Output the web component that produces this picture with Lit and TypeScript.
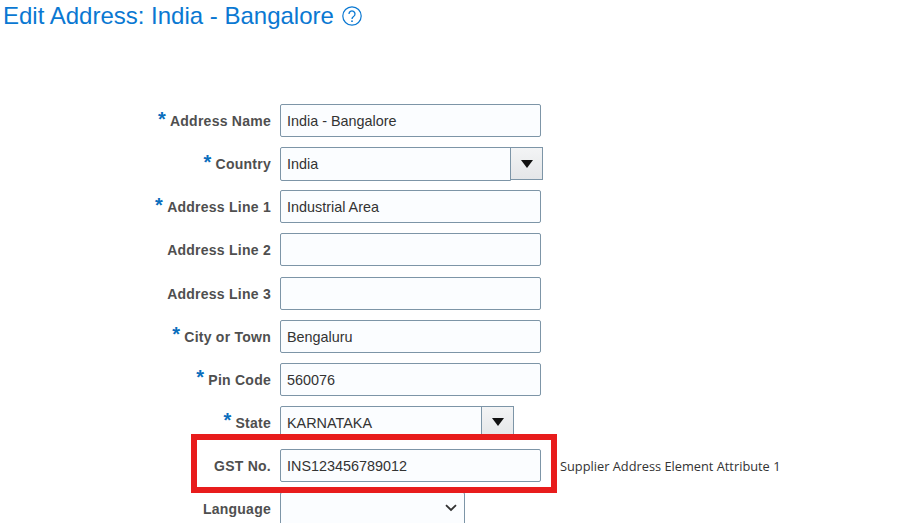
import { LitElement, html, css } from "lit";
import { customElement } from "lit/decorators.js";

interface Row { label: string; req?: boolean; value: string; kind?: "input" | "combo" | "select"; note?: string; narrow?: boolean; }

const rows: Row[] = [
  { label: "Address Name", req: true, value: "India - Bangalore" },
  { label: "Country", req: true, value: "India", kind: "combo" },
  { label: "Address Line 1", req: true, value: "Industrial Area" },
  { label: "Address Line 2", value: "" },
  { label: "Address Line 3", value: "" },
  { label: "City or Town", req: true, value: "Bengaluru" },
  { label: "Pin Code", req: true, value: "560076" },
  { label: "State", req: true, value: "KARNATAKA", kind: "combo", narrow: true },
  { label: "GST No.", value: "INS123456789012", note: "Supplier Address Element Attribute 1" },
  { label: "Language", value: "", kind: "select" },
];

@customElement("app-root")
export class AppRoot extends LitElement {
  static styles = css`
    :host { display: block; position: relative; width: 910px; height: 523px; overflow: hidden; background: #fff; font-family: "Liberation Sans", Arial, sans-serif; }
    .head { display: flex; align-items: center; gap: 8px; padding: 2px 0 0 3px; height: 27px; }
    h1 { margin: 0; font-size: 24px; line-height: 27px; font-weight: 400; color: #0a78d2; }
    .form { display: grid; grid-template-columns: 271px auto; column-gap: 9px; row-gap: 10.125px; padding-top: 75px; grid-auto-rows: 33px; justify-items: start; }
    .lab { justify-self: end; align-self: center; padding-top: 1px; font-size: 14px; letter-spacing: 0.25px; font-weight: 700; color: #4f4f4f; white-space: nowrap; display: flex; align-items: center; gap: 4px; }
    .star { color: #0a6ebd; font-size: 20px; line-height: 14px; height: 14px; margin-top: -5px; font-weight: 700; }
    .ctl { display: flex; align-items: stretch; height: 33px; }
    .box { box-sizing: border-box; width: 261px; height: 33px; border: 1px solid #7d95a7; border-radius: 2px; background: #fbfdff; padding: 0 6px; font-size: 14.4px; line-height: 33px; color: #333; white-space: nowrap; }
    .combo .box { width: 231px; height: 34px; border-radius: 2px 0 0 2px; }
    .combo.narrow .box { width: 202px; }
    .btn { box-sizing: border-box; width: 33px; height: 33px; margin-left: -1px; border: 1px solid #7d95a7; background: linear-gradient(#f3f4f5, #e4e6e8); display: flex; align-items: center; justify-content: center; }
    .select .box { width: 185px; position: relative; height: 40px; }
    .select svg { position: absolute; right: 7px; top: 11px; }
    .note { align-self: center; margin-left: 19px; font-family: "Open Sans", sans-serif; font-size: 12.8px; color: #333; white-space: nowrap; }
    .mark { position: absolute; left: 191px; top: 434px; width: 366px; height: 59px; box-sizing: border-box; border: 6px solid #e81c1c; pointer-events: none; }
  `;

  private control(r: Row) {
    if (r.kind === "combo") {
      return html`<div class="ctl combo ${r.narrow ? "narrow" : ""}"><div class="box">${r.value}</div><div class="btn"><svg width="12" height="8" viewBox="0 0 12 8"><path d="M0 0h12L6 8z" fill="#111"/></svg></div></div>`;
    }
    if (r.kind === "select") {
      return html`<div class="ctl select"><div class="box"><svg width="12" height="8" viewBox="0 0 12 8"><path d="M1 1.2 6 6l5-4.8" fill="none" stroke="#333" stroke-width="1.8"/></svg></div></div>`;
    }
    return html`<div class="ctl"><div class="box">${r.value}</div>${r.note ? html`<span class="note">${r.note}</span>` : ""}</div>`;
  }

  render() {
    return html`
      <div class="head">
        <h1>Edit Address: India - Bangalore</h1>
        <svg width="20" height="20" viewBox="0 0 20 20"><circle cx="10" cy="10" r="9.2" fill="none" stroke="#0a78d2" stroke-width="1.2"/><path d="M7 8a3 3 0 1 1 4.6 2.5C10.5 11.2 10 11.8 10 13" fill="none" stroke="#0a78d2" stroke-width="1.3"/><circle cx="10" cy="15.2" r=".9" fill="#0a78d2"/></svg>
      </div>
      <div class="form">
        ${rows.map((r) => html`
          <div class="lab">${r.req ? html`<span class="star">*</span>` : ""}<span>${r.label}</span></div>
          ${this.control(r)}
        `)}
      </div>
      <div class="mark"></div>
    `;
  }
}
